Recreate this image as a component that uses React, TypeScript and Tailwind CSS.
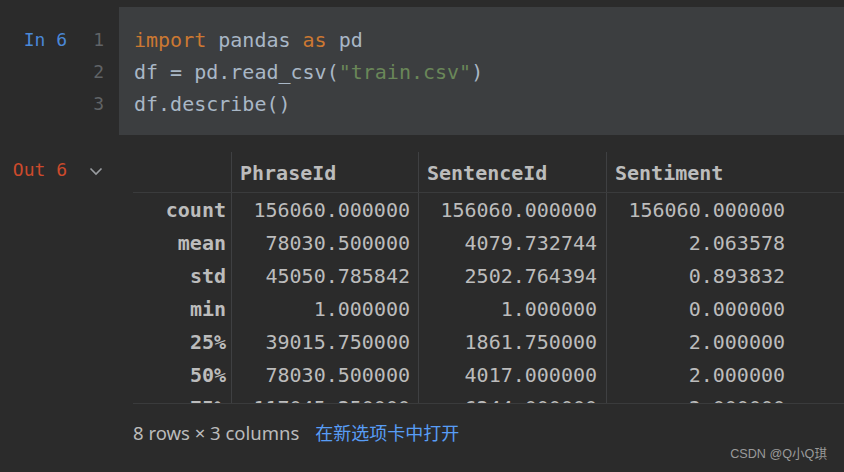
import React from 'react';

const mono = { fontFamily: '"DejaVu Sans Mono", "Liberation Mono", monospace' };

const rows = [
  ['count', '156060.000000', '156060.000000', '156060.000000'],
  ['mean', '78030.500000', '4079.732744', '2.063578'],
  ['std', '45050.785842', '2502.764394', '0.893832'],
  ['min', '1.000000', '1.000000', '0.000000'],
  ['25%', '39015.750000', '1861.750000', '2.000000'],
  ['50%', '78030.500000', '4017.000000', '2.000000'],
  ['75%', '117045.250000', '6244.000000', '3.000000'],
];

const columns = ['PhraseId', 'SentenceId', 'Sentiment'];

function Chevron() {
  return (
    <svg width="14" height="9" viewBox="0 0 14 9" fill="none">
      <path d="M1.5 1.5 L7 7 L12.5 1.5" stroke="#9a9da1" strokeWidth="1.6" />
    </svg>
  );
}

export default function App() {
  return (
    <div className="relative w-[844px] h-[472px] overflow-hidden bg-[#2b2b2b] pt-[7px]" style={mono}>
      {/* input cell */}
      <div className="flex">
        <div className="flex w-[119px] shrink-0 pt-[17px] text-[18px] leading-[32px]">
          <div className="w-[67px] text-right text-[#4a88d8]">In 6</div>
          <div className="w-[37px] text-right text-[#606366]">
            <div>1</div>
            <div>2</div>
            <div>3</div>
          </div>
        </div>
        <div className="flex-1 bg-[#3c3e40] pl-[15px] pt-[17px] pb-[15px] text-[20px] leading-[32px] text-[#a9b7c6] whitespace-pre">
          <div>
            <span className="text-[#cc7832]">import</span> pandas <span className="text-[#cc7832]">as</span> pd
          </div>
          <div>
            df = pd.read_csv(<span className="text-[#6a8759]">"train.csv"</span>)
          </div>
          <div>df.describe()</div>
        </div>
      </div>

      {/* output */}
      <div className="flex mt-[17px]">
        <div className="flex w-[133px] shrink-0 items-center h-[34px]">
          <div className="w-[67px] text-right text-[18px] text-[#cc4a2c]">Out 6</div>
          <div className="ml-[22px] mt-[5px] flex">
            <Chevron />
          </div>
        </div>
        <div className="flex-1">
          <div className="h-[252px] overflow-hidden border-b border-[#3a3b3c] text-[20px] text-[#bcbcbc]">
            <div className="flex h-[41px] border-b border-[#3a3b3c] font-bold">
              <div className="w-[98px]" />
              {columns.map((c, i) => (
                <div
                  key={c}
                  className={`${i === 0 ? 'w-[187px]' : 'w-[188px]'} border-l border-[#3f4042] pl-[8px] pt-[2px] flex items-center`}
                >
                  {c}
                </div>
              ))}
            </div>
            {rows.map((r) => (
              <div key={r[0]} className="flex h-[33px] items-center">
                <div className="w-[98px] pr-[5px] text-right font-bold">{r[0]}</div>
                <div className="w-[187px] h-full border-l border-[#3f4042] pr-[8px] flex items-center justify-end">{r[1]}</div>
                <div className="w-[188px] h-full border-l border-[#3f4042] pr-[9px] flex items-center justify-end">{r[2]}</div>
                <div className="w-[188px] h-full border-l border-[#3f4042] pr-[9px] flex items-center justify-end">{r[3]}</div>
              </div>
            ))}
          </div>
          <div
            className="mt-[17px] flex items-center gap-[16px] leading-[24px]"
            style={{ fontFamily: '"Noto Sans", "Noto Sans CJK SC", sans-serif' }}
          >
            <span className="text-[18.5px] text-[#bbbbbb]">8 rows × 3 columns</span>
            <span className="text-[18px] text-[#589df6]">在新选项卡中打开</span>
          </div>
        </div>
      </div>

      <div
        className="absolute right-[17px] bottom-[8px] text-[12.6px] text-[#9a9a9a]"
        style={{ fontFamily: '"Liberation Sans", "Noto Sans CJK SC", sans-serif' }}
      >
        CSDN @Q小Q琪
      </div>
    </div>
  );
}
